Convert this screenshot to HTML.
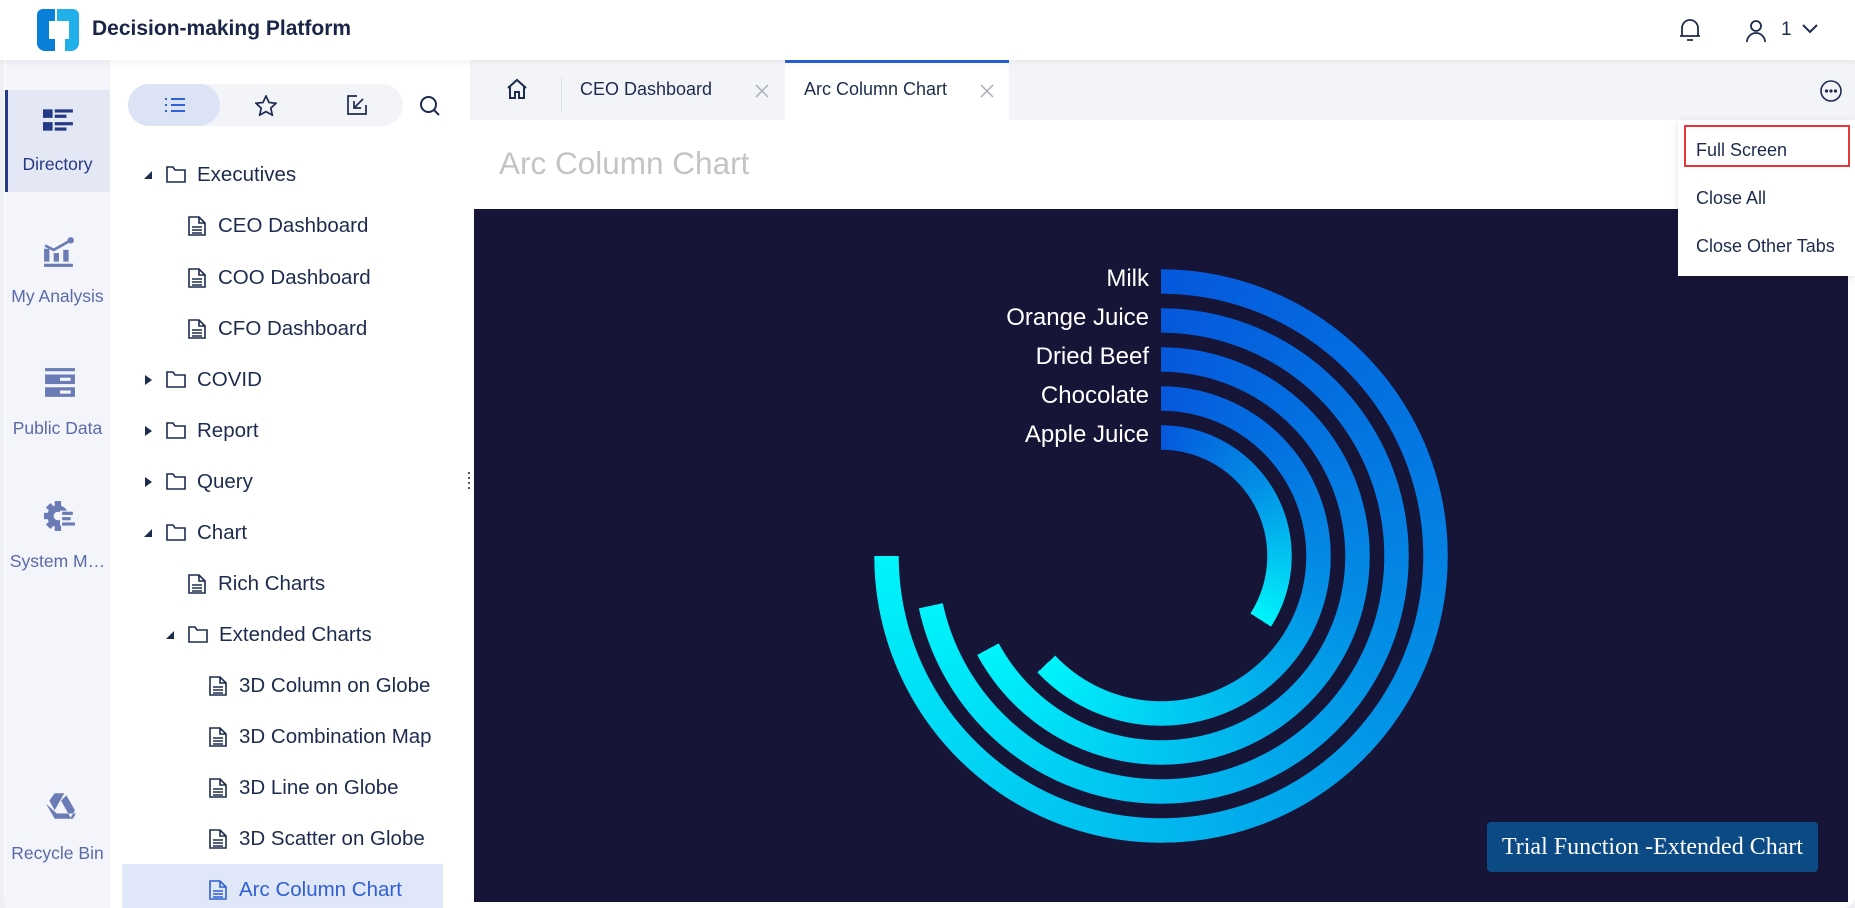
<!DOCTYPE html>
<html><head><meta charset="utf-8"><style>
*{box-sizing:border-box;margin:0;padding:0}
body{width:1855px;height:908px;overflow:hidden;background:#eef0f4;font-family:"Liberation Sans",Arial,sans-serif;position:relative}
.abs{position:absolute}
#card{position:absolute;left:4px;top:0;width:1851px;height:908px;background:#fff;border-radius:12px;overflow:hidden}
#hdr{position:absolute;left:0;top:0;width:1855px;height:60px;background:#fff;box-shadow:0 2px 6px rgba(0,0,0,.06);z-index:2}
#rail{position:absolute;left:5px;top:60px;width:105px;height:848px;background:#f3f5fa}
.ritem{position:absolute;left:0;width:105px;text-align:center;color:#5a6aa8;font-size:17.5px;white-space:nowrap}
#tree{position:absolute;left:110px;top:60px;width:360px;height:848px;background:#fff}
.row{position:absolute;font-size:20.5px;color:#1d2b4f;height:30px;line-height:30px;white-space:nowrap}
.tabbar{position:absolute;left:470px;top:60px;width:1385px;height:60px;background:#f3f4f8}
.ring{position:absolute;border-radius:50%}
.lbl{position:absolute;right:706px;color:#fff;font-size:24px;line-height:32px;text-align:right;white-space:nowrap}
.mi{position:absolute;left:1696px;font-size:18px;color:#1d2b4f}
</style></head><body>
<div id="card"></div>
<div id="hdr">
 <svg class="abs" style="left:37px;top:9px" width="42" height="42" viewBox="0 0 42 42">
  <path d="M6 0h12v12h-6v18h6v12H8a8 8 0 0 1-8-8V6a6 6 0 0 1 6-6z" fill="#0a7fd8"/>
  <path d="M20 0h16a6 6 0 0 1 6 6v28a8 8 0 0 1-8 8h-6V30h4V12H20z" fill="#22b0ea"/>
 </svg>
 <div class="abs" style="left:92px;top:17px;font-size:21px;font-weight:bold;color:#1a2447">Decision-making Platform</div>
 <svg class="abs" style="left:1678px;top:17px" width="24" height="26" viewBox="0 0 24 26" fill="none" stroke="#1d2b4f" stroke-width="1.8"><path d="M4 19V11a8 8 0 0 1 16 0v8M2 19h20M9 23h6"/></svg>
 <svg class="abs" style="left:1745px;top:19px" width="22" height="24" viewBox="0 0 22 24" fill="none" stroke="#1d2b4f" stroke-width="1.8"><circle cx="11" cy="7" r="5"/><path d="M2 23a9 9 0 0 1 18 0"/></svg>
 <div class="abs" style="left:1781px;top:19px;font-size:19px;color:#1d2b4f">1</div>
 <svg class="abs" style="left:1801px;top:23px" width="18" height="12" viewBox="0 0 18 12" fill="none" stroke="#1d2b4f" stroke-width="2"><path d="M2 2l7 7 7-7"/></svg>
</div>

<div id="rail">
 <div class="abs" style="left:0;top:30px;width:105px;height:102px;background:#e4e8f4;border-left:3px solid #243a86"></div>
 <svg class="abs" style="left:38px;top:46px" width="32" height="28" viewBox="0 0 30 26"><rect x="0" y="3" width="9" height="8" fill="#243a86"/><rect x="0" y="15" width="9" height="8" fill="#243a86"/><rect x="11" y="3" width="17" height="3" fill="#243a86"/><rect x="11" y="8" width="11" height="3" fill="#243a86"/><rect x="11" y="15" width="17" height="3" fill="#243a86"/><rect x="11" y="20" width="11" height="3" fill="#243a86"/></svg>
 <div class="ritem" style="top:94px;color:#243a86">Directory</div>
 <svg class="abs" style="left:38px;top:176px" width="32" height="32" viewBox="0 0 30 30" fill="#6b7bb5"><rect x="1" y="12" width="5" height="12"/><rect x="10" y="16" width="5" height="8"/><rect x="19" y="13" width="5" height="11"/><rect x="1" y="26" width="27" height="3"/><path d="M2 9l8 4 9-5 7-4" stroke="#6b7bb5" stroke-width="2.5" fill="none"/><circle cx="26" cy="4" r="3"/></svg>
 <div class="ritem" style="top:226px">My Analysis</div>
 <svg class="abs" style="left:39px;top:307px" width="32" height="32" viewBox="0 0 30 30" fill="#6b7bb5"><rect x="1" y="1" width="28" height="3"/><rect x="1" y="7" width="28" height="9"/><rect x="1" y="19" width="28" height="9"/><rect x="15" y="10" width="10" height="3" fill="#f3f5fa"/><rect x="15" y="22" width="10" height="3" fill="#f3f5fa"/></svg>
 <div class="ritem" style="top:358px">Public Data</div>
 <svg class="abs" style="left:39px;top:440px" width="32" height="32" viewBox="0 0 30 30" fill="#6b7bb5"><circle cx="13" cy="15" r="10"/><rect x="10" y="1" width="6" height="6"/><rect x="10" y="23" width="6" height="6"/><rect x="0" y="12" width="6" height="6"/><rect x="3" y="4" width="6" height="6" transform="rotate(45 6 7)"/><rect x="3" y="20" width="6" height="6" transform="rotate(45 6 23)"/><circle cx="13" cy="15" r="4" fill="#f3f5fa"/><rect x="15" y="10" width="15" height="14" fill="#f3f5fa"/><rect x="17" y="11" width="10" height="3"/><rect x="17" y="16" width="8" height="3"/><rect x="17" y="21" width="12" height="3"/></svg>
 <div class="ritem" style="top:491px">System M…</div>
 <svg class="abs" style="left:39px;top:731px" width="32" height="30" viewBox="0 0 30 28" fill="#6b7bb5"><path d="M10 2h9l-9 16-5-9zM21 4l8 14-4 7-9-16zM2 12l8 14h17l3-5H12z"/></svg>
 <div class="ritem" style="top:783px">Recycle Bin</div>
</div>

<div id="tree">
 <div class="abs" style="left:18px;top:24px;width:275px;height:42px;border-radius:21px;background:#f2f4f8"></div>
 <div class="abs" style="left:18px;top:24px;width:92px;height:42px;border-radius:21px;background:#dbe3f5"></div>
 <svg class="abs" style="left:54px;top:36px" width="22" height="18" viewBox="0 0 22 18" stroke="#2f62d8" stroke-width="2"><path d="M1 3h2M7 3h14M1 9h2M7 9h14M1 15h2M7 15h14"/></svg>
 <svg class="abs" style="left:145px;top:35px" width="22" height="21" viewBox="0 0 22 21" fill="none" stroke="#1d2b4f" stroke-width="1.7"><path d="M11 1l3 6.5 7 .8-5.2 4.8 1.5 7L11 16.6 4.7 20.1l1.5-7L1 8.3l7-.8z"/></svg>
 <svg class="abs" style="left:237px;top:35px" width="20" height="20" viewBox="0 0 20 20" fill="none" stroke="#1d2b4f" stroke-width="1.7"><path d="M10 1H1v18h18v-9"/><path d="M16 4l-9 9M7 6v7h7"/></svg>
 <svg class="abs" style="left:309px;top:35px" width="22" height="22" viewBox="0 0 22 22" fill="none" stroke="#1d2b4f" stroke-width="2"><circle cx="9.5" cy="9.5" r="7.5"/><path d="M15 15l5 5"/></svg>
 <div class="abs" style="left:12px;top:804px;width:321px;height:44px;background:#e0e7f8"></div>
 <div class="abs" style="left:358px;top:412px;width:2px;height:20px;background:repeating-linear-gradient(#555 0 2px,transparent 2px 5px)"></div>
</div>
<div id="rows"></div>

<div class="tabbar">
 <svg class="abs" style="left:36px;top:18px" width="22" height="22" viewBox="0 0 22 22" fill="none" stroke="#1d2b4f" stroke-width="2"><path d="M2 10L11 2l9 8M4 8v12h5v-6h4v6h5V8"/></svg>
 <div class="abs" style="left:91px;top:17px;width:1px;height:36px;background:#dcdfe6"></div>
 <div class="abs" style="left:110px;top:19px;font-size:18px;color:#1d2b4f">CEO Dashboard</div>
 <svg class="abs" style="left:284px;top:23px" width="16" height="16" stroke="#a8adb8" stroke-width="1.5"><path d="M2 2l12 12M14 2L2 14"/></svg>
 <div class="abs" style="left:315px;top:0;width:224px;height:60px;background:#fff;border-top:3px solid #2a62d8"></div>
 <div class="abs" style="left:334px;top:19px;font-size:18px;color:#1d2b4f">Arc Column Chart</div>
 <svg class="abs" style="left:509px;top:23px" width="16" height="16" stroke="#a8adb8" stroke-width="1.5"><path d="M2 2l12 12M14 2L2 14"/></svg>
 <svg class="abs" style="left:1349px;top:19px" width="24" height="24" viewBox="0 0 24 24" fill="none" stroke="#1d2b4f" stroke-width="1.6"><circle cx="12" cy="12" r="10"/><circle cx="7.5" cy="12" r=".8" fill="#1d2b4f"/><circle cx="12" cy="12" r=".8" fill="#1d2b4f"/><circle cx="16.5" cy="12" r=".8" fill="#1d2b4f"/></svg>
</div>

<div class="abs" style="left:499px;top:145px;font-size:31.5px;color:#c4c4c4">Arc Column Chart</div>

<div class="abs" style="left:474px;top:209px;width:1374px;height:693px;background:#161537;overflow:hidden" id="chart"></div>
<div id="rings" class="abs" style="left:0;top:0;width:1855px;height:908px"></div>
<div class="lbl" style="top:263px">Milk</div>
<div class="lbl" style="top:302px">Orange Juice</div>
<div class="lbl" style="top:341px">Dried Beef</div>
<div class="lbl" style="top:380px">Chocolate</div>
<div class="lbl" style="top:419px">Apple Juice</div>
<div class="abs" style="left:1487px;top:822px;width:331px;height:50px;background:#0b4a85;border-radius:4px;color:#fff;font-family:'Liberation Serif',serif;font-size:24px;line-height:50px;text-align:center;white-space:nowrap">Trial Function -Extended Chart</div>

<div class="abs" style="left:1678px;top:120px;width:177px;height:156px;background:#fff;box-shadow:0 2px 8px rgba(0,0,0,.12)"></div>
<div class="abs" style="left:1684px;top:125px;width:166px;height:42px;border:2px solid #e8363a"></div>
<div class="mi" style="top:140px">Full Screen</div>
<div class="mi" style="top:188px">Close All</div>
<div class="mi" style="top:236px">Close Other Tabs</div>

<script>
var rows=[["t","Executives",0,175,1],["f","CEO Dashboard",1,226],["f","COO Dashboard",1,278],["f","CFO Dashboard",1,329],["r","COVID",0,380],["r","Report",0,431],["r","Query",0,482],["t","Chart",0,533],["f","Rich Charts",1,584],["t","Extended Charts",1,635],["f","3D Column on Globe",2,686],["f","3D Combination Map",2,737],["f","3D Line on Globe",2,788],["f","3D Scatter on Globe",2,839],["f","Arc Column Chart",2,890]];
var h="";
rows.forEach(function(r){
 var c=r[1]=="Arc Column Chart"?"#2f5fd6":"#1d2b4f";
 if(r[0]=="f"){var x=r[2]==1?188:209;
  h+='<svg class="abs" style="left:'+x+'px;top:'+(r[3]-10)+'px" width="18" height="20" viewBox="0 0 18 20" fill="none" stroke="'+c+'" stroke-width="1.6"><path d="M1 1h10l6 6v12H1z M11 1v6h6 M4 11h10 M4 14h10 M4 17h10"/></svg>';
  h+='<div class="row" style="left:'+(x+30)+'px;top:'+(r[3]-15)+'px;color:'+c+'">'+r[1]+'</div>';}
 else{var b=r[2]==1?170:148;
  if(r[0]=="t")h+='<svg class="abs" style="left:'+(b-4)+'px;top:'+(r[3]-4)+'px" width="8" height="8"><path d="M8 0V8H0z" fill="#1d2b4f"/></svg>';
  else h+='<svg class="abs" style="left:'+(b-3)+'px;top:'+(r[3]-5)+'px" width="7" height="10"><path d="M0 0L7 5 0 10z" fill="#1d2b4f"/></svg>';
  h+='<svg class="abs" style="left:'+(b+18)+'px;top:'+(r[3]-9)+'px" width="20" height="17" viewBox="0 0 20 17" fill="none" stroke="#1d2b4f" stroke-width="1.6"><path d="M1 1h6l2 3h10v12H1z"/></svg>';
  h+='<div class="row" style="left:'+(b+49)+'px;top:'+(r[3]-15)+'px">'+r[1]+'</div>';}
});
document.getElementById("rows").innerHTML=h;
var arcs=[[287,270],[248,257.8],[209,241.7],[170,226.7],[131,122.7]];
var g="",CX=1161,CY=556;
arcs.forEach(function(a){var R=a[0],ri=R-24.5,e=a[1];
 var m="radial-gradient(circle closest-side,transparent "+(ri-.5)+"px,#000 "+ri+"px,#000 "+(R-.5)+"px,transparent "+R+"px)";
 g+='<div class="ring" style="left:'+(CX-R)+'px;top:'+(CY-R)+'px;width:'+(2*R)+'px;height:'+(2*R)+'px;background:conic-gradient(#0558dc 0deg,#0390e6 '+(e*0.45)+'deg,#00f4fb '+e+'deg,transparent '+e+'deg);-webkit-mask:'+m+';mask:'+m+'"></div>';
});
document.getElementById("rings").innerHTML=g;
</script>
</body></html>
